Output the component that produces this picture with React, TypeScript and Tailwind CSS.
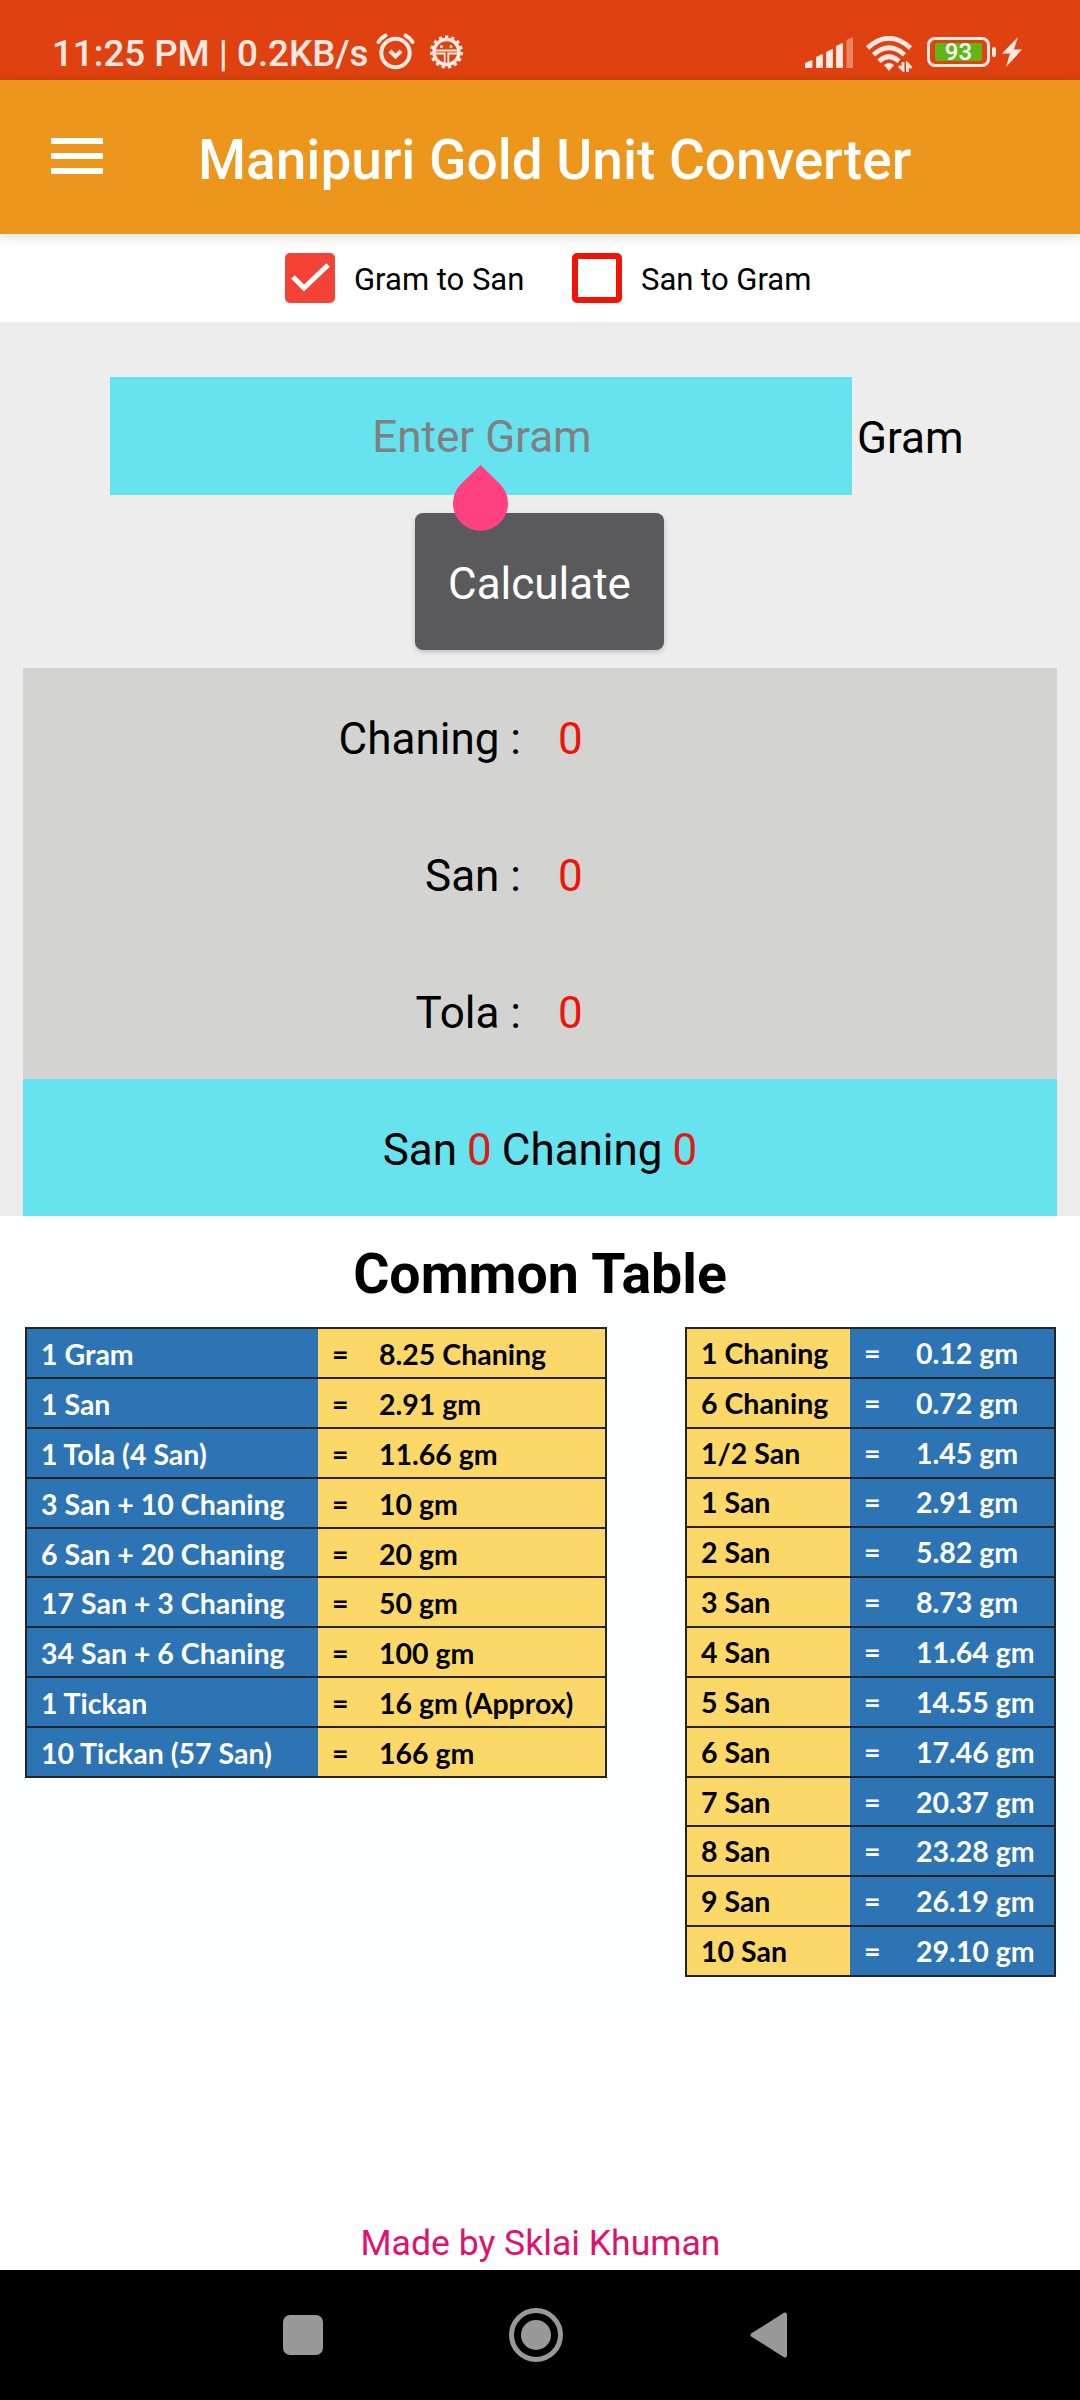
import { useState } from 'react'

const COMMON_TABLE = [
    ['1 Gram', '8.25 Chaning'],
    ['1 San', '2.91 gm'],
    ['1 Tola (4 San)', '11.66 gm'],
    ['3 San + 10 Chaning', '10 gm'],
    ['6 San + 20 Chaning', '20 gm'],
    ['17 San + 3 Chaning', '50 gm'],
    ['34 San + 6 Chaning', '100 gm'],
    ['1 Tickan', '16 gm (Approx)'],
    ['10 Tickan (57 San)', '166 gm'],
]

const SAN_TABLE = [
    ['1 Chaning', '0.12 gm'],
    ['6 Chaning', '0.72 gm'],
    ['1/2 San', '1.45 gm'],
    ['1 San', '2.91 gm'],
    ['2 San', '5.82 gm'],
    ['3 San', '8.73 gm'],
    ['4 San', '11.64 gm'],
    ['5 San', '14.55 gm'],
    ['6 San', '17.46 gm'],
    ['7 San', '20.37 gm'],
    ['8 San', '23.28 gm'],
    ['9 San', '26.19 gm'],
    ['10 San', '29.10 gm'],
]

const GRAM_PER_SAN = 2.91
const CHANING_PER_SAN = 24

function StatusBar() {
    return (
        <div className="flex h-20 items-end justify-between bg-[#df4210] pl-[52px] pr-[58px] text-[#fde9e3]">
            <div className="flex h-[60px] items-center">
                <span className="w-[323px] whitespace-nowrap pt-[7px] text-[36.700px] font-medium leading-[48px]">11:25 PM | 0.2KB/s</span>
                <svg width="92" height="40" viewBox="0 0 92 40" className="mt-[3px]" fill="none" stroke="currentColor">
                    <circle cx="20.5" cy="21" r="14.200" strokeWidth="4" />
                    <path d="M15 19l5.500 5.500 5.500-5.500" strokeWidth="4" />
                    <path d="M3.500 10q2.500-4 7-6.500M37.500 10q-2.500-4-7-6.500" strokeWidth="4" strokeLinecap="round" />
                    <circle cx="71.500" cy="20" r="12.500" strokeWidth="3.500" />
                    <circle cx="71.500" cy="20" r="14.800" strokeWidth="3.500" strokeDasharray="3.300 2.866" />
                    <path d="M59.500 18.500h24M60 21.500h9.700v11M83 21.500h-9.700v11" strokeWidth="1.800" />
                    <circle cx="66.500" cy="14.500" r="1" strokeWidth="1.200" />
                    <circle cx="76" cy="14.500" r="1" strokeWidth="1.200" />
                </svg>
            </div>
            <div className="flex h-[44px] items-start">
                <svg width="50" height="32" viewBox="0 0 50 32" className="mr-[11px] mt-[1px]" fill="currentColor" stroke="currentColor" strokeLinejoin="round">
                    <path d="M1 26.500l5.500-2.500v6H1zM12 20.500l5-2.500v12h-5zM22 15.500l5-2.500v17h-5zM32 9.500l5-2.500v23h-5z" strokeWidth="1.800" />
                    <path d="M41.500 3L48 0v31h-6.500z" opacity=".4" stroke="none" />
                </svg>
                <svg width="48" height="36" viewBox="0 0 48 36" className="mr-[13px]" fill="none" stroke="currentColor" strokeWidth="4.800">
                    <path d="M1.500 12Q23 -7.500 44.500 12" />
                    <path d="M7.500 18.700Q23 5 38.500 18.700" />
                    <path d="M13 25.200Q23 16.500 33 25.200" />
                    <path d="M18 29q5-4 10 0l-5 6z" fill="currentColor" stroke="none" />
                    <path d="M37 26v8l-4-4M41.500 36v-8l4 4" strokeWidth="2.800" />
                </svg>
                <div className="mt-[1px] flex h-[30px] w-[63px] items-center justify-center rounded-[8px] border-[3px] border-current">
                    <div className="flex h-[18px] w-[47px] items-center justify-center rounded-[2px] bg-[#61b616] text-[24px] font-medium leading-none text-white">93</div>
                </div>
                <div className="ml-[2px] mt-[11px] h-[10px] w-[4px] rounded-[2px] bg-current" />
                <svg width="20" height="30" viewBox="0 0 20 30" className="ml-[6px] mt-[1px]" fill="currentColor">
                    <path d="M16 0L0 16.500h8L4 30l16-17.500h-8z" />
                </svg>
            </div>
        </div>
    )
}

function Header() {
    return (
        <div className="relative z-10 flex h-[154px] items-center bg-[#ed961c] pl-[51px] shadow-[0_2px_12px_rgba(0,0,0,0.16)]">
            <button className="mb-[3px] mr-[95px] flex w-[52px] flex-col gap-[9px]">
                <span className="h-[6px] w-full bg-white" />
                <span className="h-[6px] w-full bg-white" />
                <span className="h-[6px] w-full bg-white" />
            </button>
            <h1 className="whitespace-nowrap pt-[6px] text-[55px] font-medium leading-[64px] text-white">Manipuri Gold Unit Converter</h1>
        </div>
    )
}

interface ModeCheckProps {
    label: string
    checked: boolean
    onClick: () => void
}

function ModeCheck({ label, checked, onClick }: ModeCheckProps) {
    return (
        <button onClick={onClick} className="flex w-[287px] items-center">
            {checked ? (
                <span className="flex size-[50px] items-center justify-center rounded-[5px] bg-[#f44336]">
                    <svg width="40" height="30" viewBox="0 0 40 30" fill="none" stroke="white" strokeWidth="5">
                        <path d="M3 14l11 11L38 2" />
                    </svg>
                </span>
            ) : (
                <span className="size-[50px] rounded-[5px] border-[6px] border-[#f11208]" />
            )}
            <span className="ml-[19px] whitespace-nowrap pt-[4px] text-[31px]">{label}</span>
        </button>
    )
}

function ResultRow({ label, value }: { label: string; value: number }) {
    return (
        <div className="flex h-[137px] items-center pt-[5px]">
            <span className="w-[498px] text-right">{label} :</span>
            <span className="ml-[37px] text-[#ee1409]">{value}</span>
        </div>
    )
}

function CommonTable() {
    return (
        <div className="flex h-[451px] w-[582px] flex-col border-2 border-[#242424]">
            {COMMON_TABLE.map(([unit, value]) => (
                <div key={unit} className="flex flex-1 border-b-2 border-[#242424] last:border-b-0">
                    <div className="flex w-[291px] items-center bg-[#2d74b5] pl-[14px] pt-[2px] text-white">{unit}</div>
                    <div className="flex flex-1 items-center bg-[#fbd868] pl-[14px] pt-[2px] text-black">
                        <span className="w-[47px]">=</span>
                        <span>{value}</span>
                    </div>
                </div>
            ))}
        </div>
    )
}

function SanTable() {
    return (
        <div className="flex h-[650px] w-[371px] flex-col border-2 border-[#242424]">
            {SAN_TABLE.map(([unit, value]) => (
                <div key={unit} className="flex flex-1 border-b-2 border-[#242424] last:border-b-0">
                    <div className="flex w-[163px] items-center bg-[#fbd868] pl-[14px] text-black">{unit}</div>
                    <div className="flex flex-1 items-center bg-[#2d74b5] pl-[14px] text-white">
                        <span className="w-[52px]">=</span>
                        <span>{value}</span>
                    </div>
                </div>
            ))}
        </div>
    )
}

function NavBar() {
    return (
        <div className="flex h-[130px] items-center bg-black pl-[283px]">
            <div className="size-[40px] rounded-[7px] bg-[#999]" />
            <div className="ml-[186px] flex size-[54px] items-center justify-center rounded-full border-[5px] border-[#999]">
                <div className="size-[30px] rounded-full bg-[#999]" />
            </div>
            <svg width="38" height="46" viewBox="0 0 38 46" className="ml-[187px]" fill="#999" stroke="#999" strokeWidth="4" strokeLinejoin="round">
                <path d="M2.500 23L35 2.500v41z" />
            </svg>
        </div>
    )
}

export default function App() {
    const [mode, setMode] = useState('gram')
    const [amount, setAmount] = useState('')
    const [san, setSan] = useState(0)

    const unit = mode === 'gram' ? 'Gram' : 'San'
    const round = (n: number) => Math.round(n * 100) / 100

    const calculate = () => {
        const n = parseFloat(amount) || 0
        setSan(mode === 'gram' ? n / GRAM_PER_SAN : n)
    }

    return (
        <div className="flex h-[2400px] w-[1080px] flex-col overflow-hidden bg-white font-['Roboto',sans-serif] text-black">
            <StatusBar />
            <Header />

            {/* Mode */}
            <div className="flex h-[88px] items-center pl-[285px]">
                <ModeCheck label="Gram to San" checked={mode === 'gram'} onClick={() => setMode('gram')} />
                <ModeCheck label="San to Gram" checked={mode === 'san'} onClick={() => setMode('san')} />
            </div>

            {/* Converter */}
            <div className="flex h-[894px] flex-col bg-[#ededed] pt-[55px] text-[44px] leading-[52px]">
                <div className="relative flex h-[118px] items-center pl-[110px]">
                    <input
                        value={amount}
                        onChange={(e) => setAmount(e.target.value)}
                        placeholder={`Enter ${unit}`}
                        className="h-full w-[742px] bg-[#66e3ee] pl-[2px] pt-[2px] text-center outline-none placeholder:text-[#808080]"
                    />
                    <span className="ml-[5px] pt-[3px]">{unit}</span>
                    {/* text cursor handle */}
                    <svg width="56" height="67" viewBox="0 0 56 67" className="absolute left-[453px] top-[88px] z-10" fill="#ff4081">
                        <path d="M27.500 0L47.500 19.500A27.500 27.500 0 1 1 7.500 19.500Z" />
                    </svg>
                </div>
                <button onClick={calculate} className="ml-[415px] mt-[18px] h-[137px] w-[249px] rounded-[8px] bg-[#5a5a5c] pt-[4px] text-white shadow-[0_2px_5px_rgba(0,0,0,0.2)]">
                    Calculate
                </button>
                <div className="mx-[23px] mt-[18px] bg-[#d3d3d1]">
                    <ResultRow label="Chaning" value={round(san * CHANING_PER_SAN)} />
                    <ResultRow label="San" value={round(san)} />
                    <ResultRow label="Tola" value={round(san / 4)} />
                </div>
                <div className="mx-[23px] flex h-[137px] items-center justify-center gap-[10px] bg-[#66e3ee] pt-[4px]">
                    <span>San</span>
                    <span className="text-[#e01b16]">{Math.floor(san)}</span>
                    <span>Chaning</span>
                    <span className="text-[#e01b16]">{Math.round((san % 1) * CHANING_PER_SAN)}</span>
                </div>
            </div>

            <h2 className="pt-[27px] text-center text-[55.400px] font-bold leading-[64px]">Common Table</h2>
            <div className="mt-[3px] flex h-[700px] items-start justify-between bg-[#fdfefe] pl-[25px] pr-[24px] pt-[17px] font-['Lato',sans-serif] text-[28.500px] font-bold leading-[30px]">
                <CommonTable />
                <SanTable />
            </div>
            <p className="mt-auto h-[54px] pl-[1px] text-center text-[35.600px] leading-[54px] text-[#e0126e]">Made by Sklai Khuman</p>
            <NavBar />
        </div>
    )
}
